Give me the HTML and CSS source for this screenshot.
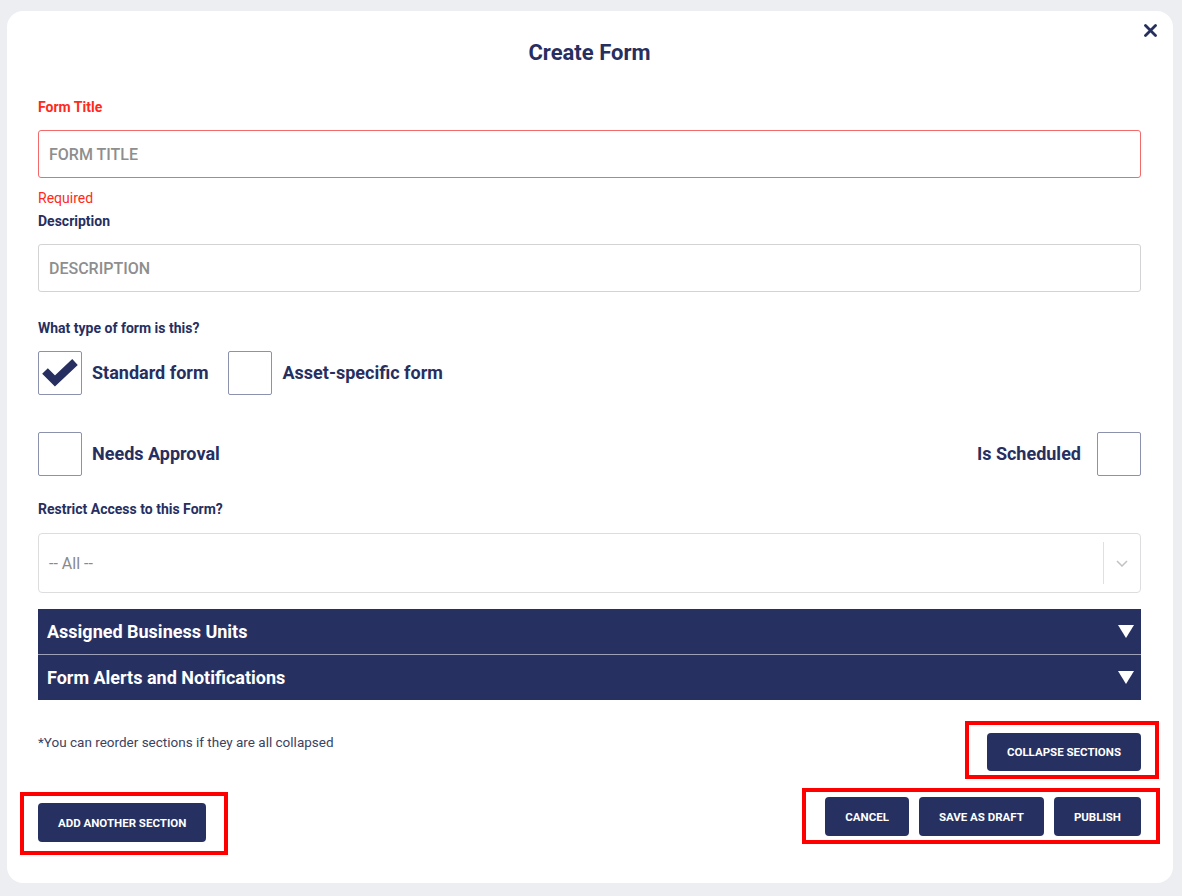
FILE: index.html
```html
<!DOCTYPE html>
<html lang="en">
<head>
    <meta charset="UTF-8">
    <meta name="viewport" content="width=device-width, initial-scale=1.0">
    <title>Create Form</title>
    <link rel="stylesheet" href="styles.css">
</head>
<body>
    <div class="modal">
        <button class="close-btn" aria-label="Close">
            <svg width="13" height="13" viewBox="0 0 13 13">
                <path d="M1.5 1.5 L11.5 11.5 M11.5 1.5 L1.5 11.5" stroke="#262f5f" stroke-width="2.8" stroke-linecap="round"/>
            </svg>
        </button>
        <h2 class="modal-title">Create Form</h2>

        <!-- title -->
        <label class="field-label error first">Form Title</label>
        <input type="text" class="text-input error" placeholder="FORM TITLE">
        <div class="error-text">Required</div>

        <!-- description -->
        <label class="field-label desc-label">Description</label>
        <input type="text" class="text-input" placeholder="DESCRIPTION">

        <!-- form type -->
        <label class="field-label type-label">What type of form is this?</label>
        <div class="type-row">
            <div class="check-item">
                <span class="check-box">
                    <svg width="44" height="44" viewBox="0 0 44 44">
                        <path d="M7 20 L17 30 L37 11" fill="none" stroke="#262f5f" stroke-width="8"/>
                    </svg>
                </span>
                <span class="check-text">Standard form</span>
            </div>
            <div class="check-item">
                <span class="check-box"></span>
                <span class="check-text">Asset-specific form</span>
            </div>
        </div>

        <div class="option-row">
            <div class="check-item">
                <span class="check-box"></span>
                <span class="check-text">Needs Approval</span>
            </div>
            <div class="check-item">
                <span class="check-text">Is Scheduled</span>
                <span class="check-box"></span>
            </div>
        </div>

        <!-- access -->
        <label class="field-label access-label">Restrict Access to this Form?</label>
        <div class="select-box">
            <span class="select-value">-- All --</span>
            <span class="select-indicator">
                <svg width="12" height="7" viewBox="0 0 12 7">
                    <path d="M1 1 L6 6 L11 1" fill="none" stroke="#c2c2c2" stroke-width="1.5"/>
                </svg>
            </span>
        </div>

        <!-- sections -->
        <div class="accordion">
            <div class="accordion-header">
                <span>Assigned Business Units</span>
                <span class="caret"></span>
            </div>
            <div class="accordion-header">
                <span>Form Alerts and Notifications</span>
                <span class="caret"></span>
            </div>
        </div>

        <div class="footer-row">
            <p class="note">*You can reorder sections if they are all collapsed</p>
            <div class="highlight hl-collapse">
                <button class="btn">COLLAPSE SECTIONS</button>
            </div>
        </div>

        <div class="footer-row bottom-row">
            <div class="highlight hl-add">
                <button class="btn">ADD ANOTHER SECTION</button>
            </div>
            <div class="highlight hl-actions">
                <div class="actions">
                    <button class="btn">CANCEL</button>
                    <button class="btn">SAVE AS DRAFT</button>
                    <button class="btn">PUBLISH</button>
                </div>
            </div>
        </div>
    </div>
</body>
</html>
```
FILE: styles.css
```css
body {
    margin: 0;
    background-color: #eceef2;
    font-family: Roboto, "Liberation Sans", sans-serif;
    color: #262f5f;
}
.modal {
    position: relative;
    box-sizing: border-box;
    height: 872px;
    margin: 11px 9px 0 7px;
    padding: 27px 32px 0 31px;
    background: #ffffff;
    border-radius: 16px;
}
.close-btn {
    position: absolute;
    top: 13px;
    right: 16px;
    padding: 0;
    border: none;
    background: none;
    line-height: 0;
    cursor: pointer;
}
.modal-title {
    margin: 0;
    font-size: 22px;
    line-height: 30px;
    font-weight: 700;
    text-align: center;
}
.field-label {
    display: block;
    font-size: 14px;
    line-height: 20px;
    font-weight: 700;
}
.field-label.first {
    margin-top: 29px;
}
.field-label.error {
    color: #ff2a1a;
}
.text-input {
    display: block;
    box-sizing: border-box;
    width: 100%;
    height: 48px;
    margin: 13px 0 0;
    padding: 0 10px;
    border: 1px solid #d3d3d6;
    border-radius: 3px;
    font-family: Roboto, "Liberation Sans", sans-serif;
    font-size: 16px;
    font-weight: 500;
    color: #262f5f;
    outline: none;
}
.text-input.error {
    border-color: #f36a6a;
}
.text-input::placeholder {
    color: #8e8e8e;
}
.error-text {
    margin-top: 10px;
    font-size: 14px;
    line-height: 20px;
    color: #ff2a1a;
}
.desc-label {
    margin-top: 3px;
}
.type-label {
    margin-top: 26px;
}
.type-row {
    display: flex;
    gap: 20px;
    margin-top: 13px;
}
.check-item {
    display: flex;
    align-items: center;
    gap: 10px;
}
.check-box {
    box-sizing: border-box;
    width: 44px;
    height: 44px;
    border: 1.5px solid #8c92ae;
    border-radius: 2px;
    line-height: 0;
}
.check-box svg {
    margin: -1.5px;
}
.check-text {
    font-size: 18px;
    font-weight: 700;
    line-height: 24px;
}
.option-row {
    display: flex;
    justify-content: space-between;
    align-items: center;
    margin-top: 37px;
}
.option-row .check-item:last-child {
    gap: 16px;
}
.access-label {
    margin-top: 23px;
}
.select-box {
    display: flex;
    align-items: center;
    box-sizing: border-box;
    height: 60px;
    margin-top: 14px;
    border: 1px solid #dddde0;
    border-radius: 4px;
}
.select-value {
    flex: 1;
    padding-left: 10px;
    font-size: 16px;
    color: #8a8a8a;
}
.select-indicator {
    display: flex;
    align-items: center;
    justify-content: center;
    width: 36px;
    height: 42px;
    border-left: 1px solid #e0e0e3;
}
.accordion {
    margin-top: 16px;
}
.accordion-header {
    display: flex;
    justify-content: space-between;
    align-items: center;
    box-sizing: border-box;
    height: 45px;
    padding: 0 7px 0 9px;
    background: #263162;
    color: #ffffff;
    font-size: 18px;
    font-weight: 700;
}
.accordion-header + .accordion-header {
    height: 46px;
    border-top: 1px solid #9ca1b9;
}
.caret {
    width: 0;
    height: 0;
    border-left: 8px solid transparent;
    border-right: 8px solid transparent;
    border-top: 13px solid #ffffff;
}
.footer-row {
    display: flex;
    justify-content: space-between;
    align-items: flex-start;
    margin-top: 33px;
}
.bottom-row {
    margin-top: 26px;
}
.note {
    margin: 0;
    font-size: 13.5px;
    line-height: 18px;
    color: #3b4262;
}
.btn {
    height: 38px;
    padding: 0 20px;
    border: none;
    border-radius: 4px;
    background: #263162;
    color: #ffffff;
    font-family: Roboto, "Liberation Sans", sans-serif;
    font-size: 11.5px;
    font-weight: 700;
    letter-spacing: 0;
    cursor: pointer;
}
.actions {
    display: flex;
    gap: 10px;
}
.actions .btn {
    height: 39px;
}
.highlight {
    border: 4px solid #ff0000;
    line-height: 0;
}
.hl-collapse {
    padding: 8px 14px 4px 18px;
    margin: -12px -18px -8px -22px;
}
.hl-actions {
    padding: 5px 15px 4px 19px;
    margin: -9px -19px -8px -23px;
}
.hl-add {
    padding: 7px 18px 9px 14px;
    margin: -5px -22px -13px -18px;
}
.hl-add .btn {
    height: 39px;
}
```
